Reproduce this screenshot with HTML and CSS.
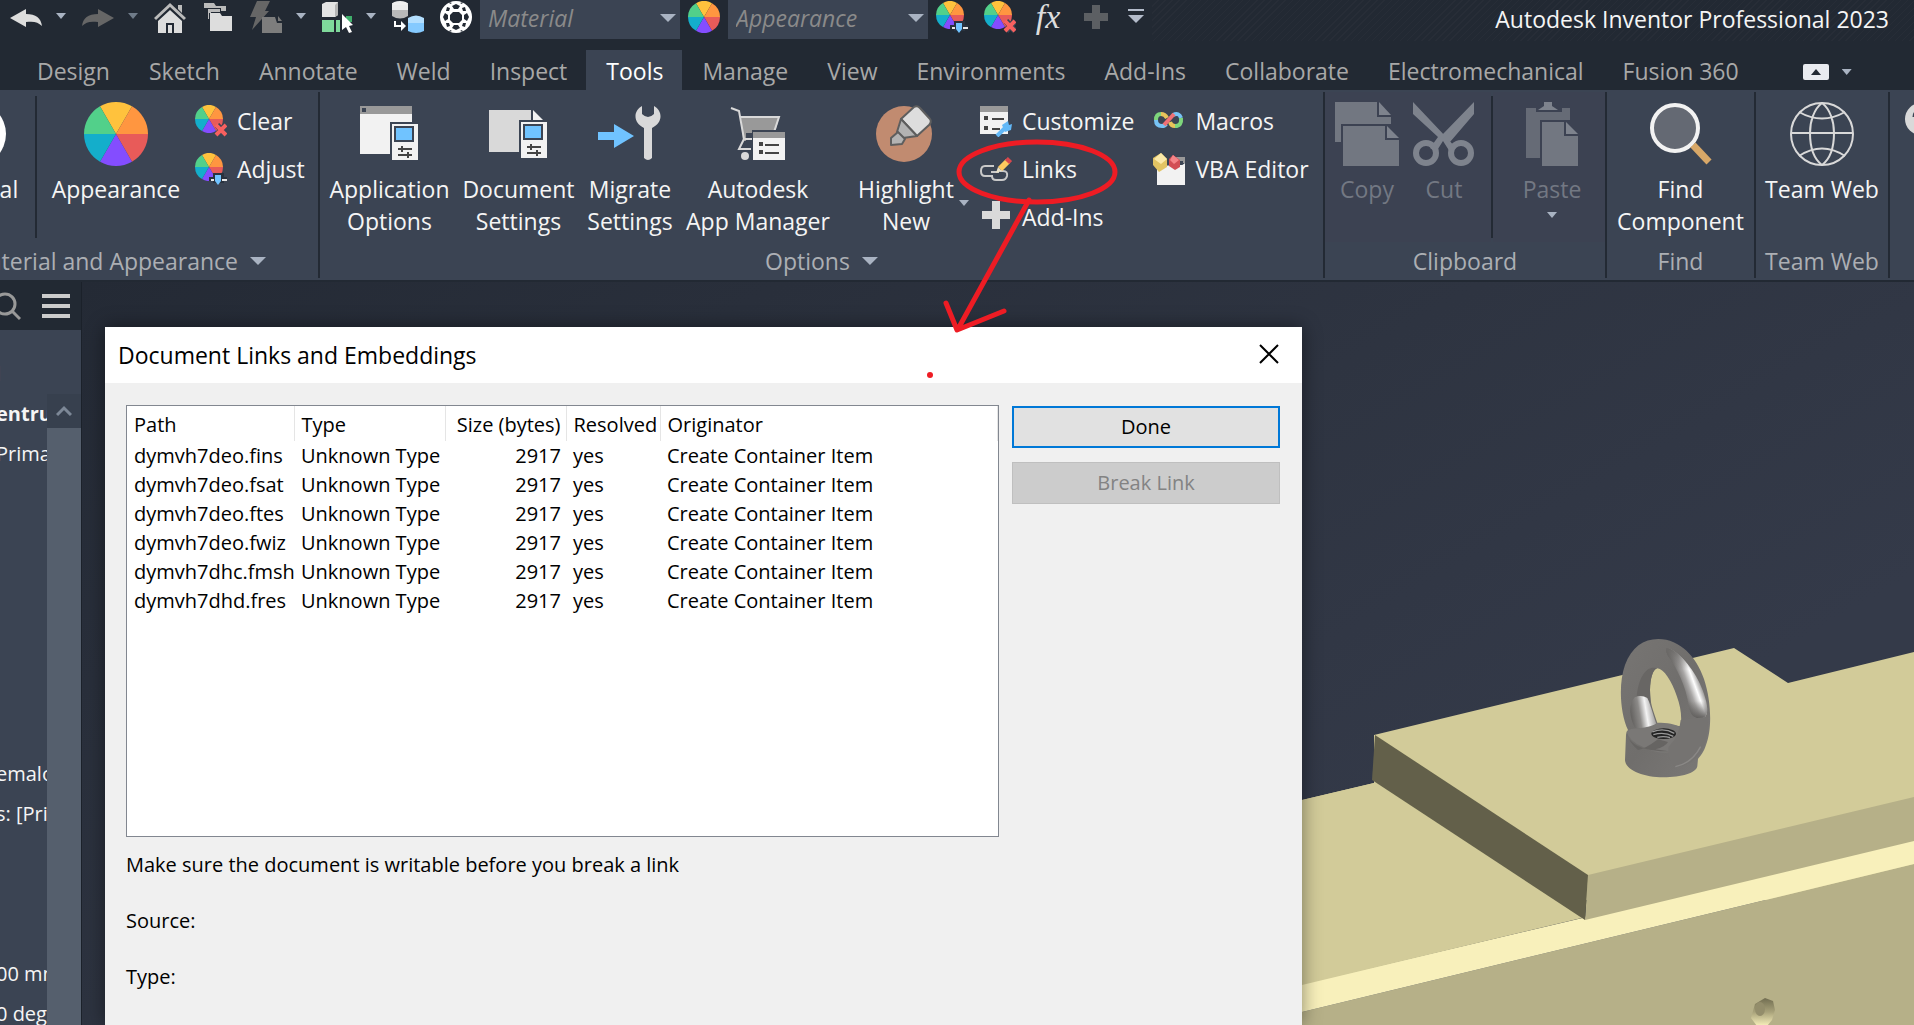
FILE: index.html
```html
<!DOCTYPE html>
<html lang="en">
<head>
<meta charset="utf-8">
<title>Autodesk Inventor Professional 2023</title>
<link rel="stylesheet" href="styles.css">
</head>
<body>
<svg class="defs" aria-hidden="true">
  <symbol id="wheel" viewBox="-32 -32 64 64">
    <path fill="#ffc23d" d="M0 0L-16-27.7A32 32 0 0 1 16-27.7Z"/>
    <path fill="#ff9640" d="M0 0L16-27.7A32 32 0 0 1 32 0Z"/>
    <path fill="#e85b59" d="M0 0H32A32 32 0 0 1 16 27.7Z"/>
    <path fill="#844dff" d="M0 0L16 27.7A32 32 0 0 1-16 27.7Z"/>
    <path fill="#14aecb" d="M0 0L-16 27.7A32 32 0 0 1-32 0Z"/>
    <path fill="#52d08a" d="M0 0H-32A32 32 0 0 1-16-27.7Z"/>
  </symbol>
  <symbol id="wheel-clear" viewBox="0 0 32 32">
    <use href="#wheel" x="0" y="0" width="28" height="28"/>
    <path d="M22 20l9 10M31 20l-9 10" stroke="#3b4453" stroke-width="6"/>
    <path d="M21 20l10 10M31 20l-10 10" stroke="#f8605f" stroke-width="4"/>
  </symbol>
  <symbol id="wheel-adjust" viewBox="0 0 32 32">
    <use href="#wheel" x="0" y="0" width="28" height="28"/>
    <path d="M14 24h18v4H14zM18 20h11v10H18z" fill="#2a323e"/>
    <path d="M16 26h3v2h-3zM27 26h5v2h-5z" fill="#e8e8e8"/>
    <path d="M20 22h6v6l-3 4-3-4z" fill="#70c3ff"/>
  </symbol>
  <symbol id="ball" viewBox="0 0 32 32">
    <circle cx="16" cy="16" r="16" fill="#fff"/>
    <g fill="#222933">
      <path d="M13 11h6l3 3v5l-3 3h-6l-3-3v-5z"/>
      <path d="M12 5l4-2 4 2-2 3h-4zM12 27l4 2 4-2-2-3h-4zM5 12l-2 4 2 4 3-2v-4zM27 12l2 4-2 4-3-2v-4z"/>
      <path d="M7 6l3 1-1 3-3 0zM25 6l-3 1 1 3 3 0zM7 26l3-1-1-3-3 0zM25 26l-3-1 1-3 3 0z"/>
      <path d="M9 1l3 1-2 1zM23 1l-3 1 2 1zM9 31l3-1-2-1zM23 31l-3-1 2-1z"/>
    </g>
  </symbol>
  <symbol id="sliders-page" viewBox="0 0 28 38">
    <path fill="#3b4453" d="M0 0h28v38H0z"/>
    <path fill="#f2f2f2" d="M2 2h26v36H2z"/>
    <path fill="#3b4453" d="M4 4h20v16H4z"/>
    <path fill="#70c3ff" d="M6 6h16v12H6z"/>
    <path d="M8 27h14M8 33h14M12 24v6M18 30v6" stroke="#444" stroke-width="2"/>
  </symbol>
</svg>

<header class="titlebar">
  <div class="qat qat--history">
    <button class="tool" aria-label="Undo"><svg width="32" height="32"><path fill="#ddd" d="M0 17L16 8v5c10 0 15 4 16 12-4-4-8-5-16-4v5z"/></svg></button>
    <button class="caret" aria-label="Undo list"></button>
    <button class="tool" aria-label="Redo"><svg width="32" height="32"><path fill="#666" d="M32 17L16 8v5C6 13 1 17 0 25c4-4 8-5 16-4v5z"/></svg></button>
    <button class="caret caret--dim" aria-label="Redo list"></button>
    <button class="tool" aria-label="Home"><svg width="32" height="32"><path fill="none" stroke="#bbb" stroke-width="3" d="M1 18L16 4l15 14"/><path fill="#bbb" d="M24 4h4v8l-4-4z"/><path fill="#ddd" d="M4 20L16 9l12 11v12H20V22h-8v10H4z"/><path fill="#ddd" d="M14 24h4v8h-4z"/></svg></button>
    <button class="tool" aria-label="Projects"><svg width="32" height="32"><path fill="#bbb" d="M4 2h10l2 3h10v5H15l-2 8H8V7H4z"/><path fill="#222933" d="M8 7h13v8H8z"/><path fill="#bbb" d="M8 8h12v3h-9v7H8z"/><path fill="#222933" d="M9 12h14v20H9z"/><path fill="#ddd" d="M10 12h10l2 3h10v15H10z"/></svg></button>
    <button class="tool tool--wide" aria-label="Local update"><svg width="36" height="32"><path fill="#666" d="M11 0h13l-5 10h4L6 29l4-13H4z"/><path fill="#7d7d7d" d="M16 16h13l2 6h5v10H16z"/><path fill="#777" d="M32 15l4 5h-4z"/></svg></button>
    <button class="caret" aria-label="Update list"></button>
    <button class="tool tool--slim" aria-label="Select"><svg width="34" height="32"><path fill="#e3e3e3" d="M0 3l4-2h12v13l-3 2H0z"/><path fill="#b5b5b5" d="M13 4l3-3v13l-3 2z"/><path fill="#7fd99b" d="M0 19h12v12H0zM14 19h4v12h-4z"/><path fill="#3fae6b" d="M24 15h6v6h-6z"/><path fill="#fff" d="M20 13l11 11-4 1 3 6-3 1-3-6-4 3z"/></svg></button>
    <button class="caret" aria-label="Selection filter"></button>
    <button class="tool" aria-label="Bodies"><svg width="32" height="32"><path fill="#b9b9b9" d="M0 2h16v13q-8 5-16 0z"/><ellipse cx="8" cy="3" rx="8" ry="3" fill="#f0f0f0"/><path fill="#ececec" d="M0 4h16v5H0z"/><path fill="none" stroke="#fff" stroke-width="2" d="M3 20v5h7"/><path fill="#fff" d="M9 20l5 5-5 5z"/><path fill="#85caff" d="M16 17h16v13q-8 4-16 0z"/><path fill="#b3dfff" d="M16 17q8-5 16 0v5H16z"/></svg></button>
  </div>
  <div class="qat qat--style">
    <button class="tool" aria-label="Material browser"><svg width="32" height="32"><use href="#ball"/></svg></button>
    <span class="combo"><select aria-label="Material"><option>Material</option></select></span>
    <button class="tool" aria-label="Appearance browser"><svg width="32" height="32"><use href="#wheel"/></svg></button>
    <span class="combo"><select aria-label="Appearance"><option>Appearance</option></select></span>
  </div>
  <div class="qat qat--edit">
    <button class="tool" aria-label="Adjust appearance"><svg width="32" height="32"><use href="#wheel-adjust"/></svg></button>
    <button class="tool" aria-label="Clear appearance"><svg width="32" height="32"><use href="#wheel-clear"/></svg></button>
    <button class="tool tool--fx" aria-label="Parameters">fx</button>
    <button class="tool" aria-label="Add"><svg width="32" height="32"><path fill="#5c5f63" d="M12 4h8v8h8v8h-8v8h-8v-8H4v-8h8z"/></svg></button>
    <button class="tool tool--menu" aria-label="Customize quick access"><svg width="16" height="32"><path fill="#b4bccb" d="M0 8h16v2H0zM0 14h16l-8 8z"/></svg></button>
  </div>
  <h1 class="titlebar__name">Autodesk Inventor Professional 2023</h1>
</header>

<nav class="tabs">
  <a href="#design">Design</a>
  <a href="#sketch">Sketch</a>
  <a href="#annotate">Annotate</a>
  <a href="#weld">Weld</a>
  <a href="#inspect">Inspect</a>
  <a href="#tools" class="is-active" aria-current="page">Tools</a>
  <a href="#manage">Manage</a>
  <a href="#view">View</a>
  <a href="#environments">Environments</a>
  <a href="#addins">Add-Ins</a>
  <a href="#collaborate">Collaborate</a>
  <a href="#electro">Electromechanical</a>
  <a href="#fusion">Fusion 360</a>
  <div class="tabs__toggle">
    <button class="tool" aria-label="Minimize ribbon"><svg width="28" height="18"><rect x="1" y="1" width="26" height="16" rx="2" fill="#e9ebf0"/><path fill="#222933" d="M9 12h10l-5-6z"/></svg></button>
    <button class="caret" aria-label="Ribbon display options"></button>
  </div>
</nav>

<section class="ribbon">
  <div class="panel panel--material">
    <div class="panel__body">
      <button class="cmd cmd--material"><svg width="64" height="64"><use href="#ball"/></svg><span>Material</span></button>
      <i class="rule"></i>
      <button class="cmd cmd--appearance"><svg width="64" height="64"><use href="#wheel"/></svg><span>Appearance</span></button>
      <div class="stack stack--clear">
        <button class="row"><svg width="32" height="32"><use href="#wheel-clear"/></svg>Clear</button>
        <button class="row"><svg width="32" height="32"><use href="#wheel-adjust"/></svg>Adjust</button>
      </div>
    </div>
    <button class="panel__label">Material and Appearance<i class="tri"></i></button>
  </div>

  <div class="panel">
    <div class="panel__body panel__body--options">
      <button class="cmd cmd--option"><svg width="64" height="64"><path fill="#f2f2f2" d="M2 4h52v48H2z"/><path fill="#999" d="M2 4h52v8H2z"/><path fill="#3b4453" d="M4 6h4v4H4z"/><use href="#sliders-page" x="32" y="20" width="28" height="38"/></svg><span>Application<br>Options</span></button>
      <button class="cmd cmd--option"><svg width="64" height="64"><path fill="#d9d9d9" d="M2 8h42v42H2z"/><path fill="#f2f2f2" d="M46 8l10 10H46z"/><use href="#sliders-page" x="32" y="18" width="28" height="38"/></svg><span>Document<br>Settings</span></button>
      <button class="cmd cmd--migrate"><svg width="64" height="64"><path fill="#70c3ff" d="M0 30h16v-8l20 12-20 12v-8H0z"/><path fill="#d9d9d9" d="M44 4c-9 5-9 17 2 22v30q4 4 8 0V26c11-5 11-17 2-22v8q-6 6-12 0z"/></svg><span>Migrate<br>Settings</span></button>
      <button class="cmd cmd--manager"><svg width="64" height="64"><path fill="#999" d="M15 16h38l-4 15H20v8h-3z"/><path fill="none" stroke="#d9d9d9" stroke-width="2" d="M5 6l8 3 5 28-5 10h12M14 15h39l-5 15M19 37h8"/><circle cx="19" cy="54" r="4" fill="#d9d9d9"/><path fill="#3b4453" d="M26 28h36v32H26z"/><path fill="#f2f2f2" d="M27 30h32v28H27z"/><path fill="#999" d="M27 30h32v6H27z"/><path fill="#444" d="M33 40h4v4h-4zM39 42h14v2H39zM33 48h4v4h-4zM39 50h14v2H39z"/></svg><span>Autodesk<br>App Manager</span></button>
      <button class="cmd cmd--highlight"><svg width="64" height="64"><circle cx="30" cy="32" r="28" fill="#c18b70"/><g stroke="#5e5e5e" stroke-width="2" stroke-linejoin="round"><path fill="#ddd" d="M27 17L40 5q3-2 6 1l10 11q2 3-1 6L43 34z"/><path fill="#b3b3b3" d="M27 17l16 17-14 2-6-6z"/><path fill="#b3b3b3" d="M24 30l7 7-3 5-11 1v-7z"/></g></svg><span>Highlight<br>New</span></button>
      <div class="stack">
        <button class="row"><svg width="32" height="32"><path fill="#f2f2f2" d="M0 1h28v28H0z"/><path fill="#999" d="M0 1h28v6H0z"/><path fill="#444" d="M4 11h4v4H4zM12 13h12v2H12zM4 21h4v4H4zM12 23h8v2h-8z"/><path stroke="#62b8f7" stroke-width="4" d="M17 31L27 21"/><path fill="#62b8f7" d="M22 20l6-4 1 4 3-1-1 6-6 2z"/></svg>Customize</button>
        <button class="row"><svg width="32" height="32"><g fill="none" stroke="#c9c9c9" stroke-width="2"><path d="M14 13H5q-4 0-4 5t4 5h8"/><path d="M20 18h3q5 0 4 5-1 4-5 4h-6q-4 0-4-4"/><path d="M11 19h8"/></g><path stroke="#ffc95e" stroke-width="6" d="M20 16l8-8"/><path stroke="#d9474d" stroke-width="6" d="M27 9l3-3"/><path fill="#e8e0c8" d="M16 20l2-6 4 4z"/></svg>Links</button>
        <button class="row"><svg width="32" height="32"><path fill="#d9d9d9" d="M12 0h8v10h10v8H20v10h-8V18H2v-8h10z"/></svg>Add-Ins</button>
      </div>
      <div class="stack">
        <button class="row"><svg width="32" height="32"><g fill="none" stroke-width="4"><path stroke="#7ed67c" d="M8 9q-5 0-5 6"/><path stroke="#e8c35a" d="M8 9q4 0 6 4"/><path stroke="#77c3f5" d="M3 15q0 6 6 6 3 0 4-2"/><path stroke="#77c3f5" d="M20 10q6-3 8 3"/><path stroke="#7ed67c" d="M28 13q1 8-6 8"/><path stroke="#e8c35a" d="M22 21q-4 0-5-4"/><path stroke="#f07075" d="M11 20L21 9"/></g></svg>Macros</button>
        <button class="row"><svg width="32" height="32"><path fill="#f2f2f2" d="M4 12h28v20H4z"/><path fill="#999" d="M20 4h12v6H20z"/><path fill="#3b4453" d="M4 10h8l6 6 12-6v-2H4z"/><path fill="#f2f2f2" d="M4 20l6-2 6-6 8 4 8-6v8H4z"/><path fill="#e2c463" d="M8 0l6 6v8l-8 5-6-7V5z"/><path fill="#fbe9a8" d="M8 0l6 6-6 5-7-5z"/><path fill="#d24d54" d="M20 2l7 5v7l-5 3-6-4V6z"/><path fill="#f58488" d="M20 2l6 5-5 4-4-4z"/></svg>VBA Editor</button>
      </div>
    </div>
    <button class="panel__label">Options<i class="tri"></i></button>
  </div>

  <div class="panel">
    <div class="panel__body">
      <button class="cmd cmd--copy" disabled><svg width="64" height="64"><path fill="#727781" d="M0 0h42v15h14v9H6v16H0z"/><path fill="#7e838d" d="M44 0l12 13H44z"/><path fill="#3c4252" d="M6 22h60v42H6z"/><path fill="#727781" d="M8 24h42v14h14v26H8z"/><path fill="#7e838d" d="M52 24l12 12H52z"/></svg><span>Copy</span></button>
      <button class="cmd cmd--cut" disabled><svg width="64" height="64"><g stroke="#7e838d" fill="none"><circle cx="14" cy="51" r="10" stroke-width="6"/><circle cx="49" cy="51" r="10" stroke-width="6"/></g><path fill="#7e838d" d="M1 0l34 36 9 10-6 4-7-11-7 11-6-4 8-11L1 12zM62 0v12L38 40l-8-7z"/></svg><span>Cut</span></button>
      <i class="rule"></i>
      <button class="cmd cmd--paste" disabled><svg width="64" height="64"><path fill="#666b76" d="M6 6h44v12H20v38H6z"/><path fill="#3c4252" d="M16 0h26v10H16z"/><path fill="#7e838d" d="M24 0h8v4l6 4H18l6-4z"/><path fill="#3c4252" d="M20 18h38v46H20z"/><path fill="#727781" d="M22 20h22v14h14v30H22z"/><path fill="#7e838d" d="M46 20l12 12H46z"/></svg><span>Paste</span><i class="tri tri--small"></i></button>
    </div>
    <div class="panel__label">Clipboard</div>
  </div>

  <div class="panel">
    <div class="panel__body">
      <button class="cmd cmd--fill"><svg width="64" height="64"><circle cx="26" cy="26" r="23" fill="#646973" stroke="#f2f2f2" stroke-width="4"/><path stroke="#d8a868" stroke-width="7" d="M44 43l16 17"/></svg><span>Find<br>Component</span></button>
    </div>
    <div class="panel__label">Find</div>
  </div>

  <div class="panel">
    <div class="panel__body">
      <button class="cmd cmd--fill"><svg width="64" height="64"><g fill="none" stroke="#d9d9d9" stroke-width="2"><circle cx="32" cy="32" r="31"/><path d="M1 31h62M20 31c0-12 4-24 12-30 8 6 12 18 12 30 0 14-4 26-12 32-8-6-12-18-12-32M9 10q23 13 46 0M9 54q23-15 46 0"/></g></svg><span>Team Web</span></button>
    </div>
    <div class="panel__label">Team Web</div>
  </div>

  <div class="panel panel--last">
    <button class="tool" aria-label="Help"><svg width="32" height="32"><circle cx="16" cy="16" r="16" fill="#d9d9d9"/><path fill="none" stroke="#3b4453" stroke-width="3" d="M9 14q0-6 7-6t7 6q0 4-7 6v3"/></svg></button>
  </div>
</section>

<main class="workspace">
  <aside class="browser">
    <div class="browser__bar">
      <button class="tool" aria-label="Search"><svg width="21" height="30"><g fill="none" stroke="#999" stroke-width="3"><circle cx="5" cy="13" r="10"/><path d="M12 20l8 8"/></g></svg></button>
      <button class="tool" aria-label="Browser menu"><svg width="28" height="24"><path fill="#ccc" d="M0 0h28v4H0zM0 10h28v4H0zM0 20h28v4H0z"/></svg></button>
    </div>
    <div class="browser__body">
      <ul class="tree">
        <li class="tree__accent">l</li>
        <li class="tree__strong">entrum</li>
        <li class="tree__gap7">Primary</li>
        <li>emalo</li>
        <li class="tree__gap3">s: [Primary</li>
        <li>00 mm</li>
        <li>0 deg</li>
      </ul>
      <div class="scroll">
        <button class="scroll__up" aria-label="Scroll up"><svg width="16" height="12"><path fill="none" stroke="#7d8897" stroke-width="3" d="M1 10l7-7 7 7"/></svg></button>
        <div class="scroll__track"></div>
      </div>
    </div>
  </aside>

  <div class="viewport">
    <svg class="model" viewBox="1302 282 612 743" role="img" aria-label="Plate with lifting eye nut">
      <defs>
        <linearGradient id="steel" x1="0" y1="0" x2="1" y2="1"><stop offset="0" stop-color="#777573"/><stop offset=".5" stop-color="#706e6c"/><stop offset="1" stop-color="#7b7977"/></linearGradient>
        <linearGradient id="shine" gradientUnits="userSpaceOnUse" x1="238" y1="200" x2="320" y2="170"><stop offset="0" stop-color="#666462"/><stop offset=".3" stop-color="#a8a6a5"/><stop offset=".52" stop-color="#fff"/><stop offset=".75" stop-color="#8c8a88"/><stop offset="1" stop-color="#605e5c"/></linearGradient>
        <linearGradient id="fade" x1="0" y1="0" x2="0" y2="1"><stop offset="0" stop-color="#6b6967"/><stop offset=".3" stop-color="#6b6967" stop-opacity="0"/><stop offset=".75" stop-color="#6b6967" stop-opacity="0"/><stop offset="1" stop-color="#605e5c"/></linearGradient>
        <linearGradient id="shine2" x1="0" y1=".4" x2="1" y2=".2"><stop offset="0" stop-color="#666462"/><stop offset=".3" stop-color="#8c8a88"/><stop offset=".55" stop-color="#f4f4f4"/><stop offset="1" stop-color="#706e6c"/></linearGradient>
        <linearGradient id="bore" x1="0" y1="0" x2="0" y2="1"><stop offset="0" stop-color="#716d51"/><stop offset=".5" stop-color="#a8a27a"/><stop offset="1" stop-color="#f8f0bb"/></linearGradient>
      </defs>
      <path fill="#d2cb99" d="M1302 800L1374 783 1374 735 1734 648 1788 683 1914 652V900H1302z"/>
      <path fill="#b6b088" d="M1302 1012L1914 864V1025H1302z"/>
      <path fill="#f8f0bb" d="M1302 984L1914 840V864L1302 1012z"/>
      <path fill="#d2cb99" d="M1302 800L1374 783 1586 917 1302 985z"/>
      <path fill="#b6b088" d="M1588 875L1914 797V841L1585 920z"/>
      <path fill="#63604a" d="M1375 735L1588 875 1585 920 1372 780z"/>
      <g transform="translate(1600 620) scale(.3333)">
        <path fill="url(#steel)" fill-rule="evenodd" d="M84 330C60 280 55 190 75 135 95 82 130 57 175 57c65 0 115 55 137 120 22 66 25 150 6 198-7 22-15 30-24 42l-2 22c-4 20-46 33-102 33-60 0-114-22-115-52l3-75q0-10 6-15zM172 145c-14 4-21 30-22 65 0 45 10 60 22 99l70 10c4-30 0-60-12-92-15-44-38-80-58-82z"/>
        <path fill="#686664" d="M150 210c1-35 8-61 22-65-30-10-55 20-62 85 15-5 30 0 42 20z"/>
        <path fill="url(#shine)" d="M200 84q10 0 26 12c40 30 80 90 93 150 6 30 3 50-20 50-20-2-28-12-33-40-9-60-35-110-63-150q-7-14-3-22z"/>
        <path fill="url(#fade)" d="M200 84q10 0 26 12c40 30 80 90 93 150 6 30 3 50-20 50-20-2-28-12-33-40-9-60-35-110-63-150q-7-14-3-22z"/>
        <path fill="url(#shine2)" d="M104 232q20-9 38 2c10 20 20 60 30 84q-30 8-66 7c-18-30-22-70-2-93z"/>
        <path fill="#7a7876" d="M80 335q10-10 36-10 40-4 56-17c30 0 54 4 70 14l-20 74q-50 8-94-16-40-16-48-45z"/>
        <path fill="#666462" d="M80 338c8 40 60 56 126 56l-40-6q30-8 38-22l-30-8q-40 30-60 32-25-20-34-52z"/>
        <ellipse cx="191" cy="341" rx="37" ry="16" fill="#232323"/>
        <path fill="none" stroke="#999" stroke-width="4" d="M157 336q34-14 66 4M160 344q32-10 60 5M172 352q20-5 38 1"/>
        <path fill="#757371" d="M242 300q-4 50-36 80-6 40 20 60 50 0 80-50 20-40 18-100z"/>
        <path fill="none" stroke="#8a8886" stroke-width="4" d="M226 440q50-10 76-60"/>
      </g>
      <path fill="url(#bore)" d="M1755 1004l10-6 8 3 2 9-3 10-5 6h-10l-6-8z"/>
      <ellipse cx="1760" cy="1009" rx="5" ry="7" fill="#938d6b"/>
    </svg>

    <section class="dialog" role="dialog" aria-labelledby="dialog-title">
      <header class="dialog__bar">
        <h2 id="dialog-title">Document Links and Embeddings</h2>
        <button class="tool" aria-label="Close"><svg width="20" height="20"><path stroke="#000" stroke-width="2" d="M1 1l18 18M19 1L1 19"/></svg></button>
      </header>
      <div class="dialog__content">
        <div class="list">
          <table>
            <colgroup><col class="c-path"><col class="c-type"><col class="c-size"><col class="c-resolved"><col class="c-origin"></colgroup>
            <thead><tr><th>Path</th><th>Type</th><th class="num">Size (bytes)</th><th>Resolved</th><th>Originator</th></tr></thead>
            <tbody>
              <tr><td>dymvh7deo.fins</td><td>Unknown Type</td><td class="num">2917</td><td>yes</td><td>Create Container Item</td></tr>
              <tr><td>dymvh7deo.fsat</td><td>Unknown Type</td><td class="num">2917</td><td>yes</td><td>Create Container Item</td></tr>
              <tr><td>dymvh7deo.ftes</td><td>Unknown Type</td><td class="num">2917</td><td>yes</td><td>Create Container Item</td></tr>
              <tr><td>dymvh7deo.fwiz</td><td>Unknown Type</td><td class="num">2917</td><td>yes</td><td>Create Container Item</td></tr>
              <tr><td>dymvh7dhc.fmsh</td><td>Unknown Type</td><td class="num">2917</td><td>yes</td><td>Create Container Item</td></tr>
              <tr><td>dymvh7dhd.fres</td><td>Unknown Type</td><td class="num">2917</td><td>yes</td><td>Create Container Item</td></tr>
            </tbody>
          </table>
        </div>
        <div class="dialog__actions">
          <button class="btn btn--default">Done</button>
          <button class="btn" disabled>Break Link</button>
        </div>
        <div class="dialog__info">
          <p>Make sure the document is writable before you break a link</p>
          <p>Source:</p>
          <p>Type:</p>
        </div>
      </div>
    </section>
  </div>
</main>

<svg class="markup" width="1200" height="400" aria-hidden="true">
  <g fill="none" stroke="#ee1c24" stroke-width="5" stroke-linecap="round" stroke-linejoin="round">
    <ellipse cx="1037" cy="172" rx="78" ry="30"/>
    <path d="M1029 200L958 329M946 303l11 27 47-19"/>
  </g>
  <ellipse cx="930" cy="375" rx="3" ry="3" fill="#ee1c24"/>
</svg>
</body>
</html>
```
FILE: styles.css
```css
* { box-sizing: border-box; }

body {
  margin: 0;
  height: 100vh;
  overflow: hidden;
  position: relative;
  display: flex;
  flex-direction: column;
  background: #222933;
  color: #f5f5f5;
  font: 23px/32px "Open Sans", "Noto Sans", sans-serif;
}

h1, h2, p, ul { margin: 0; padding: 0; font: inherit; }
svg { display: block; flex: none; }
a { color: inherit; text-decoration: none; }
.defs { position: absolute; width: 0; height: 0; }

button {
  margin: 0;
  padding: 0;
  border: 0;
  background: none;
  color: inherit;
  font: inherit;
}

/* Title bar */
.titlebar {
  display: flex;
  align-items: flex-start;
  height: 50px;
  flex: none;
}
.qat { display: flex; align-items: flex-start; flex: none; }
.qat--history { gap: 14px; padding-left: 10px; }
.qat--style { gap: 8px; padding-left: 16px; }
.qat--edit { gap: 16px; padding: 0 8px; }
.tool { flex: none; }
.qat .tool { width: 32px; height: 32px; margin-top: 1px; }
.qat .tool--wide { width: 36px; }
.qat .tool--slim { width: 30px; }
.qat .tool--menu { width: 16px; }
.qat .tool--fx {
  font: italic 34px/28px "Liberation Serif", serif;
  color: #ddd;
}
.caret {
  width: 12px;
  height: 32px;
  flex: none;
}
.caret::before, .tri {
  content: "";
  display: block;
  width: 10px;
  height: 6px;
  background: #a9b3c2;
  clip-path: polygon(0 0, 100% 0, 50% 100%);
}
.caret--dim::before { background: #6f7b89; }
.combo { position: relative; flex: none; }
.combo select {
  appearance: none;
  display: block;
  width: 200px;
  height: 39px;
  padding: 0 40px 2px 8px;
  border: 0;
  border-radius: 0;
  background: #3b4453;
  color: #8a8a8a;
  font: italic 23px/37px "Open Sans", sans-serif;
}
.combo::after {
  content: "";
  position: absolute;
  right: 4px;
  top: 14px;
  width: 16px;
  height: 8px;
  background: #a9b3c2;
  clip-path: polygon(0 0, 100% 0, 50% 100%);
  pointer-events: none;
}
.titlebar__name {
  flex: 1;
  height: 41px;
  padding: 3px 25px 0 0;
  text-align: right;
  white-space: nowrap;
  background: repeating-linear-gradient(135deg, #222933 0 4px, #272d37 4px 5px);
}

/* Ribbon tabs */
.tabs {
  display: flex;
  height: 40px;
  flex: none;
  padding-left: 17px;
  color: #a8a8a8;
}
.tabs a { padding: 5px 19px 0 20px; white-space: nowrap; }
.tabs .is-active { background: #3b4453; color: #fff; }
.tabs__toggle { display: flex; align-items: center; gap: 12px; padding: 4px 0 0 44px; }
.tabs__toggle .caret { height: 6px; }

/* Ribbon */
.ribbon {
  display: grid;
  grid-template-columns: 320px 1005px 282px 149px 134px 1fr;
  height: 192px;
  flex: none;
  padding: 2px 0;
  background: #3b4453;
  border-bottom: 2px solid #222933;
}
.panel {
  display: flex;
  flex-direction: column;
  min-width: 0;
  overflow: hidden;
  border-right: 2px solid #232a34;
}
.panel--last { border: 0; padding: 11px 0 0 15px; }
.panel__body { display: flex; flex: 1; min-height: 0; }
.panel__body--options { padding-left: 5px; }
.panel__label {
  display: flex;
  justify-content: center;
  align-items: center;
  gap: 12px;
  height: 36px;
  padding-top: 2px;
  color: #acafb4;
  white-space: nowrap;
}
.tri { width: 16px; height: 8px; flex: none; }
.tri--small { width: 10px; height: 6px; }
.panel--material .panel__body { justify-content: flex-end; }
.panel--material .panel__label { justify-content: flex-end; padding-right: 52px; }
.rule { width: 2px; margin: 4px 0; background: #232a34; flex: none; }

.cmd {
  display: flex;
  flex-direction: column;
  align-items: center;
  gap: 7px;
  padding-top: 10px;
  flex: none;
  white-space: nowrap;
}
.cmd:disabled { background: #3c4252; color: #737883; }
.cmd--material { width: 122px; }
.cmd--appearance { width: 158px; }
.cmd--option { width: 129px; }
.cmd--migrate { width: 94px; }
.cmd--manager { width: 162px; }
.cmd--highlight { width: 134px; position: relative; }
.cmd--highlight::after {
  content: "";
  position: absolute;
  right: 4px;
  top: 108px;
  width: 10px;
  height: 6px;
  background: #a9b3c2;
  clip-path: polygon(0 0, 100% 0, 50% 100%);
}
.cmd--copy { width: 84px; }
.cmd--cut { width: 82px; padding-right: 12px; }
.cmd--paste { width: 112px; padding-left: 6px; }
.cmd--fill { flex: 1; }

.stack {
  display: flex;
  flex-direction: column;
  gap: 16px;
  padding: 13px 12px 0 7px;
  flex: none;
}
.stack--clear { width: 123px; padding: 13px 0 0; }
.row { display: flex; gap: 10px; white-space: nowrap; }

/* Workspace */
.workspace { display: flex; flex: 1; min-height: 0; }
.browser {
  display: flex;
  flex-direction: column;
  width: 82px;
  flex: none;
  border-right: 1px solid #1b212a;
}
.browser__bar {
  display: flex;
  justify-content: space-between;
  align-items: center;
  height: 48px;
  padding-right: 11px;
  flex: none;
}
.browser__body {
  display: flex;
  flex: 1;
  min-height: 0;
  background: #3b4453;
  font-size: 20px;
}
.tree {
  width: 47px;
  padding-top: 24px;
  overflow: hidden;
  list-style: none;
  line-height: 40px;
  white-space: nowrap;
}
.tree li { height: 40px; text-indent: -4px; }
.tree .tree__accent { color: #e8a763; }
.tree .tree__strong { font-weight: 700; }
.tree .tree__gap7 { margin-bottom: 280px; }
.tree .tree__gap3 { margin-bottom: 120px; }
.scroll { display: flex; flex-direction: column; flex: 1; padding-top: 64px; }
.scroll__up {
  display: grid;
  place-items: center;
  height: 34px;
  background: #37404e;
}
.scroll__track { flex: 1; background: #555f6d; }

.viewport {
  position: relative;
  flex: 1;
  min-width: 0;
  overflow: hidden;
  background: linear-gradient(150deg, #242a35, #2e3441 45%, #343a49 75%);
}
.model { width: 612px; height: 743px; margin-left: auto; }

/* Dialog */
.dialog {
  position: absolute;
  left: 23px;
  top: 45px;
  bottom: 0;
  width: 1197px;
  max-width: calc(100% - 46px);
  background: #f0f0f0;
  color: #000;
  box-shadow: 0 0 18px rgba(0, 0, 0, .45);
}
.dialog__bar {
  display: flex;
  justify-content: space-between;
  align-items: center;
  height: 56px;
  padding: 0 23px 0 13px;
  background: #fff;
}
.dialog__bar .tool { margin-bottom: 2px; }
.dialog__content {
  display: grid;
  grid-template-columns: 1fr 268px;
  gap: 14px 13px;
  padding: 22px 22px 0 21px;
  font-size: 20px;
  line-height: 28px;
}
.list {
  height: 432px;
  background: #fff;
  border: 1px solid #828790;
}
table { width: 100%; table-layout: fixed; border-collapse: collapse; }
th, td { padding: 0 5px 0 7px; text-align: left; font-weight: 400; white-space: nowrap; }
th { height: 35px; padding-top: 2px; border-right: 1px solid #e5e5e5; }
td { height: 29px; }
.num { text-align: right; }
.c-path { width: 167px; }
.c-type { width: 151px; }
.c-size { width: 121px; }
.c-resolved { width: 94px; }
.dialog__actions { display: flex; flex-direction: column; gap: 14px; padding-top: 1px; }
.btn {
  height: 42px;
  background: #e1e1e1;
  border: 1px solid #adadad;
}
.btn--default { border: 2px solid #0078d7; }
.btn:disabled { background: #ccc; border-color: #bfbfbf; color: #838383; }
.dialog__info { display: grid; gap: 28px; }

.markup { position: absolute; left: 0; top: 0; pointer-events: none; }
```
